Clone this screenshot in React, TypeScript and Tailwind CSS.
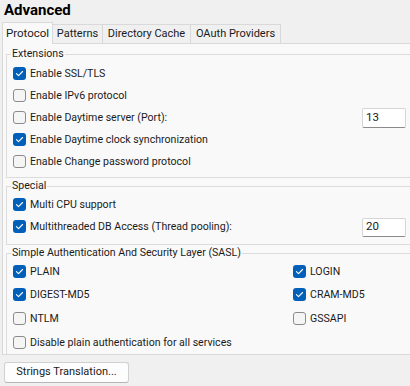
import React from 'react';

interface CheckProps {
  checked?: boolean;
  label: string;
}

const CheckBox: React.FC<CheckProps> = ({ checked, label }) => (
  <div className="flex items-center">
    {checked ? (
      <span className="w-[13px] h-[13px] rounded-[3px] bg-[#005fb8] flex items-center justify-center shrink-0">
        <svg width="13" height="13" viewBox="0 0 13 13">
          <path d="M3.4 6.7 L5.5 8.7 L9.6 4.5" fill="none" stroke="#ffffff" strokeWidth="1.1" strokeLinecap="round" strokeLinejoin="round" />
        </svg>
      </span>
    ) : (
      <span className="w-[13px] h-[13px] rounded-[3px] border border-[#8b8b8b] bg-[#f5f5f5] shrink-0" />
    )}
    <span className="ml-[4px] whitespace-nowrap">{label}</span>
  </div>
);

const NumBox: React.FC<{ value: string; className?: string }> = ({ value, className }) => (
  <div
    className={
      'w-[44px] bg-white border border-[#d6d6d6] border-b-[#8a8a8a] rounded-[2px] pl-[3px] flex items-center text-[11.5px] ' +
      (className || '')
    }
  >
    {value}
  </div>
);

const tabs = [
  { name: 'Protocol', w: 'w-[51px]' },
  { name: 'Patterns', w: 'w-[50px]' },
  { name: 'Directory Cache', w: 'w-[88px]' },
  { name: 'OAuth Providers', w: 'w-[90px]' },
];

export default function App() {
  return (
    <div
      className="w-[410px] h-[386px] bg-[#f0f0f0] overflow-hidden text-[10.6px] text-[#1b1b1b]"
      style={{ fontFamily: 'Roboto, "Liberation Sans", sans-serif' }}
    >
      <div className="h-[22px] pl-[4px] pt-[1px] text-[15px] font-bold leading-[18px] text-black">Advanced</div>

      {/* tab strip */}
      <div className="flex items-end h-[21px] pl-[2px] text-[11px]">
        {tabs.map((t, i) =>
          i === 0 ? (
            <div
              key={t.name}
              className={t.w + ' h-[22px] -mb-[1px] relative z-10 bg-[#f9f9f9] border border-b-0 border-[#d9d9d9] flex items-center justify-center text-[11.5px]'}
            >
              {t.name}
            </div>
          ) : (
            <div
              key={t.name}
              className={t.w + ' h-[19px] bg-[#f0f0f0] border border-l-0 border-b-0 border-[#d9d9d9] flex items-center justify-center'}
            >
              {t.name}
            </div>
          )
        )}
      </div>

      {/* tab panel */}
      <div className="ml-[2px] w-[430px] h-[312px] pt-[2px] bg-[#f9f9f9] border border-[#d9d9d9] overflow-hidden">
        <fieldset className="ml-[3px] w-[420px] border border-[#dcdcdc] pl-[6px] pb-[4px]">
          <legend className="ml-[-2px] px-[1px] leading-[16px]">Extensions</legend>
          <div className="mt-[1px]">
            <div className="h-[22px] flex items-center">
              <CheckBox checked label="Enable SSL/TLS" />
            </div>
            <div className="h-[22px] flex items-center">
              <CheckBox label="Enable IPv6 protocol" />
            </div>
            <div className="h-[22px] flex items-center">
              <div className="w-[349px]">
                <CheckBox label="Enable Daytime server (Port):" />
              </div>
              <NumBox value="13" className="h-[20px]" />
            </div>
            <div className="h-[22px] flex items-center">
              <CheckBox checked label="Enable Daytime clock synchronization" />
            </div>
            <div className="h-[22px] flex items-center">
              <CheckBox label="Enable Change password protocol" />
            </div>
          </div>
        </fieldset>

        <fieldset className="ml-[3px] w-[420px] border border-[#dcdcdc] pl-[6px] pb-[6px]">
          <legend className="ml-[-2px] px-[1px] leading-[16px]">Special</legend>
          <div className="h-[22px] flex items-center">
            <CheckBox checked label="Multi CPU support" />
          </div>
          <div className="h-[22px] flex items-center">
            <div className="w-[349px]">
              <CheckBox checked label="Multithreaded DB Access (Thread pooling):" />
            </div>
            <NumBox value="20" className="h-[19px]" />
          </div>
        </fieldset>

        <fieldset className="ml-[3px] w-[420px] border border-[#dcdcdc] pl-[6px] pb-[10px]">
          <legend className="ml-[-2px] px-[1px] leading-[16px]">Simple Authentication And Security Layer (SASL)</legend>
          <div className="grid grid-cols-[280px_1fr]">
            <div className="h-[22px] flex items-center">
              <CheckBox checked label="PLAIN" />
            </div>
            <div className="h-[22px] flex items-center">
              <CheckBox checked label="LOGIN" />
            </div>
            <div className="h-[24px] flex items-center">
              <CheckBox checked label="DIGEST-MD5" />
            </div>
            <div className="h-[24px] flex items-center">
              <CheckBox checked label="CRAM-MD5" />
            </div>
            <div className="h-[24px] flex items-center">
              <CheckBox label="NTLM" />
            </div>
            <div className="h-[24px] flex items-center">
              <CheckBox label="GSSAPI" />
            </div>
            <div className="h-[23px] flex items-center col-span-2">
              <CheckBox label="Disable plain authentication for all services" />
            </div>
          </div>
        </fieldset>
      </div>

      <div className="pl-[4px] pt-[7px]">
        <button className="w-[125px] h-[21px] bg-[#fdfdfd] border border-[#d0d0d0] border-b-[#b5b5b5] rounded-[3px] text-[11px] flex items-center justify-center">
          Strings Translation...
        </button>
      </div>
    </div>
  );
}
